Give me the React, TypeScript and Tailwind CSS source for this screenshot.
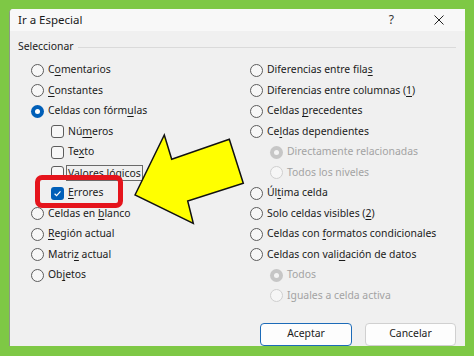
import React from "react";

type Kind = "radio" | "check";
type Item = {
  label: string;
  kind: Kind;
  checked?: boolean;
  disabled?: boolean;
  indent?: boolean;
  focus?: boolean;
};

function Mn({ text }: { text: string }) {
  const i = text.indexOf("&");
  if (i < 0) return <>{text}</>;
  return (
    <>
      {text.slice(0, i)}
      <span className="underline underline-offset-[2px] decoration-[1px]">{text.charAt(i + 1)}</span>
      {text.slice(i + 2)}
    </>
  );
}

function Radio({ checked, disabled }: { checked?: boolean; disabled?: boolean }) {
  if (checked && !disabled)
    return (
      <span className="w-[13px] h-[13px] shrink-0 rounded-full bg-[#005fb8] flex items-center justify-center">
        <span className="w-[5px] h-[5px] rounded-full bg-white" />
      </span>
    );
  if (checked && disabled)
    return (
      <span className="w-[13px] h-[13px] shrink-0 rounded-full bg-[#c6c6c6] flex items-center justify-center">
        <span className="w-[5px] h-[5px] rounded-full bg-[#f4f4f4]" />
      </span>
    );
  if (disabled)
    return <span className="w-[13px] h-[13px] shrink-0 rounded-full border border-[#cfcfcf] bg-[#f6f6f6]" />;
  return <span className="w-[13px] h-[13px] shrink-0 rounded-full border border-[#5c5c5c] bg-[#f7f7f7]" />;
}

function Check({ checked }: { checked?: boolean }) {
  if (checked)
    return (
      <span className="w-[13px] h-[13px] shrink-0 rounded-[3px] bg-[#005fb8] flex items-center justify-center">
        <svg width="9" height="9" viewBox="0 0 9 9">
          <path d="M1.6 4.7 L3.6 6.6 L7.5 2.4" fill="none" stroke="#ffffff" strokeWidth="1.2" />
        </svg>
      </span>
    );
  return <span className="w-[13px] h-[13px] shrink-0 rounded-[3px] border border-[#5c5c5c] bg-[#f7f7f7]" />;
}

function Row({ item }: { item: Item }) {
  return (
    <div className={item.indent ? "h-[20.5px] flex items-center gap-[4px] pl-[20px]" : "h-[20.5px] flex items-center gap-[4px]"}>
      {item.kind === "radio" ? <Radio checked={item.checked} disabled={item.disabled} /> : <Check checked={item.checked} />}
      <span
        className={
          item.focus
            ? "text-[#1b1b1b] border border-[#6a6a6a] px-[1px] leading-[14px] -ml-[2px]"
            : item.disabled
            ? "text-[#a3a3a3]"
            : "text-[#1b1b1b]"
        }
      >
        <Mn text={item.label} />
      </span>
    </div>
  );
}

const left: Item[] = [
  { label: "C&omentarios", kind: "radio" },
  { label: "&Constantes", kind: "radio" },
  { label: "Celdas con fórm&ulas", kind: "radio", checked: true },
  { label: "Nú&meros", kind: "check", indent: true },
  { label: "Te&xto", kind: "check", indent: true },
  { label: "Valores lógicos", kind: "check", indent: true, focus: true },
  { label: "&Errores", kind: "check", indent: true, checked: true },
  { label: "Celdas en &blanco", kind: "radio" },
  { label: "&Región actual", kind: "radio" },
  { label: "Matri&z actual", kind: "radio" },
  { label: "Ob&jetos", kind: "radio" },
];

const right: Item[] = [
  { label: "Diferencias entre fila&s", kind: "radio" },
  { label: "Diferencias entre columnas (&1)", kind: "radio" },
  { label: "Celdas &precedentes", kind: "radio" },
  { label: "Ce&ldas dependientes", kind: "radio" },
  { label: "Directamente relacionadas", kind: "radio", indent: true, disabled: true, checked: true },
  { label: "Todos los niveles", kind: "radio", indent: true, disabled: true },
  { label: "Úl&tima celda", kind: "radio" },
  { label: "Solo celdas visibles (&2)", kind: "radio" },
  { label: "Celdas con &formatos condicionales", kind: "radio" },
  { label: "Celdas con vali&dación de datos", kind: "radio" },
  { label: "Todos", kind: "radio", indent: true, disabled: true, checked: true },
  { label: "Iguales a celda activa", kind: "radio", indent: true, disabled: true },
];

export default function App() {
  return (
    <div
      className="relative w-[474px] h-[356px] bg-[#7ec845] pt-[9px] pl-[9px] pr-[9px] pb-[10px] text-[10.4px] text-[#1b1b1b]"
      style={{ fontFamily: '"Noto Sans", "Open Sans", sans-serif' }}
    >
      <div className="h-full flex flex-col bg-[#f0f0f0] border-l border-[#8c9a86] rounded-tl-[4px] overflow-hidden">
        <div className="h-[22px] shrink-0 bg-[#f8f8f8] flex items-center pl-[8px]">
          <span className="text-[11.5px] text-[#1a1a1a]">Ir a Especial</span>
          <span className="ml-auto text-[12px] text-[#333] mr-[40px]">?</span>
          <svg width="10" height="10" viewBox="0 0 10 10" className="mr-[21px]">
            <path d="M0.5 0.5 L9.5 9.5 M9.5 0.5 L0.5 9.5" stroke="#222" strokeWidth="1" />
          </svg>
        </div>
        <div className="flex-1 flex flex-col pt-[8px]">
          <div className="h-[16px] flex items-center pl-[8px] pr-[9px]">
            <span>Seleccionar</span>
            <div className="flex-1 h-px bg-[#dadada] ml-[4px]" />
          </div>
          <div className="flex pl-[21px] mt-[4.75px]">
            <div className="w-[219px] flex flex-col">
              {left.map((it) => (
                <Row key={it.label} item={it} />
              ))}
            </div>
            <div className="flex-1 flex flex-col">
              {right.map((it) => (
                <Row key={it.label} item={it} />
              ))}
            </div>
          </div>
          <div className="flex justify-end gap-[13px] pr-[9px] mt-[16.75px]">
            <button className="w-[92px] h-[23px] rounded-[4px] bg-[#fdfdfd] border border-[#1c6bb8] text-[#1b1b1b]">
              Aceptar
            </button>
            <button className="w-[91px] h-[23px] rounded-[4px] bg-[#fdfdfd] border border-[#d0d0d0] text-[#1b1b1b]">
              Cancelar
            </button>
          </div>
        </div>
      </div>

      <div className="absolute left-[35px] top-[175px] w-[88px] h-[33px] border-[5px] border-[#e5141c] rounded-[7px] pointer-events-none" />

      <svg className="absolute left-0 top-0 pointer-events-none" width="474" height="356" viewBox="0 0 474 356">
        <polygon
          points="135,195 164.3,135 171.7,159.3 229.3,139.3 243.3,183.3 187.7,201 193.3,223.3"
          fill="#ffff00"
          stroke="#111"
          strokeWidth="1.5"
          strokeLinejoin="miter"
        />
      </svg>
    </div>
  );
}
